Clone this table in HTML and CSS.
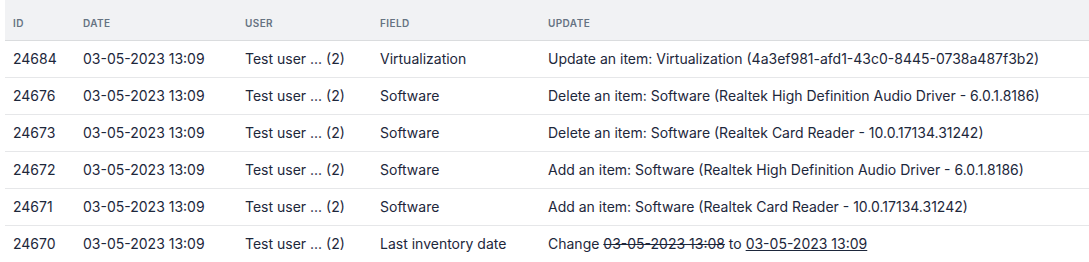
FILE: index.html
```html
<!DOCTYPE html>
<html lang="en">
<head>
<meta charset="UTF-8">
<meta name="viewport" content="width=device-width, initial-scale=1.0">
<title>Historical</title>
<link rel="stylesheet" href="styles.css">
</head>
<body>
<div class="container">
  <table class="log-table">
    <thead>
      <tr>
        <th class="col-id">ID</th>
        <th class="col-date">Date</th>
        <th class="col-user">User</th>
        <th class="col-field">Field</th>
        <th>Update</th>
      </tr>
    </thead>
    <tbody>
      <tr>
        <td>24684</td>
        <td>03-05-2023 13:09</td>
        <td>Test user ... (2)</td>
        <td>Virtualization</td>
        <td>Update an item: Virtualization (4a3ef981-afd1-43c0-8445-0738a487f3b2)</td>
      </tr>
      <tr>
        <td>24676</td>
        <td>03-05-2023 13:09</td>
        <td>Test user ... (2)</td>
        <td>Software</td>
        <td>Delete an item: Software (Realtek High Definition Audio Driver - 6.0.1.8186)</td>
      </tr>
      <tr>
        <td>24673</td>
        <td>03-05-2023 13:09</td>
        <td>Test user ... (2)</td>
        <td>Software</td>
        <td>Delete an item: Software (Realtek Card Reader - 10.0.17134.31242)</td>
      </tr>
      <tr>
        <td>24672</td>
        <td>03-05-2023 13:09</td>
        <td>Test user ... (2)</td>
        <td>Software</td>
        <td>Add an item: Software (Realtek High Definition Audio Driver - 6.0.1.8186)</td>
      </tr>
      <tr>
        <td>24671</td>
        <td>03-05-2023 13:09</td>
        <td>Test user ... (2)</td>
        <td>Software</td>
        <td>Add an item: Software (Realtek Card Reader - 10.0.17134.31242)</td>
      </tr>
      <tr>
        <td>24670</td>
        <td>03-05-2023 13:09</td>
        <td>Test user ... (2)</td>
        <td>Last inventory date</td>
        <td>Change <del>03-05-2023 13:08</del> to <ins>03-05-2023 13:09</ins></td>
      </tr>
    </tbody>
  </table>
</div>
</body>
</html>
```

FILE: styles.css
```css
body {
  margin: 0;
  font-family: 'Inter', 'Noto Sans', sans-serif;
  font-size: 14px;
  color: #1d273b;
  background: #fff;
}

.container {
  padding-left: 5px;
}

.log-table {
  width: 100%;
  border-collapse: collapse;
  table-layout: fixed;
}

.log-table th,
.log-table td {
  padding: 0 8px;
  text-align: left;
  white-space: nowrap;
  border-bottom: 1px solid #e6e7e9;
}

.log-table th {
  height: 40px;
  padding-top: 6px;
  box-sizing: border-box;
  background-color: #f1f2f4;
  color: #667382;
  font-size: 10px;
  font-weight: 600;
  text-transform: uppercase;
  letter-spacing: 0.04em;
  border-bottom-color: #dadcde;
}

.log-table td {
  height: 36px;
}

.log-table tbody tr:last-child td {
  border-bottom: none;
}

.col-id { width: 70px; }
.col-date { width: 162px; }
.col-user { width: 135px; }
.col-field { width: 168px; }

del {
  text-decoration: line-through;
}

ins {
  text-decoration: underline;
}
```
